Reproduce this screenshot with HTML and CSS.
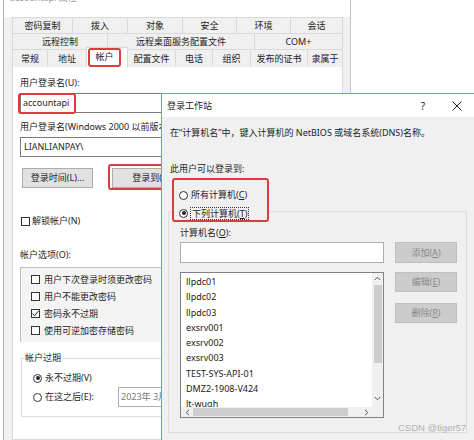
FILE: index.html
```html
<!DOCTYPE html>
<html lang="zh-CN">
<head>
<meta charset="utf-8">
<title>accountapi 属性</title>
<link rel="stylesheet" href="styles.css">
</head>
<body>
<div class="win main">
  <div class="win-title"><span class="win-title-text">accountapi 属性</span></div>
  <div class="tabs">
    <div class="tab-row r1">
      <div class="tab">密码复制</div><div class="tab">拨入</div><div class="tab">对象</div><div class="tab">安全</div><div class="tab">环境</div><div class="tab last">会话</div>
    </div>
    <div class="tab-row r2">
      <div class="tab">远程控制</div><div class="tab">远程桌面服务配置文件</div><div class="tab last">COM+</div>
    </div>
    <div class="tab-row r3">
      <div class="tab">常规</div><div class="tab">地址</div><div class="tab sel"><span class="sel-mark">帐户</span></div><div class="tab">配置文件</div><div class="tab">电话</div><div class="tab">组织</div><div class="tab">发布的证书</div><div class="tab last">隶属于</div>
    </div>
  </div>
  <div class="panel">
    <div class="lbl">用户登录名(U):</div>
    <div class="textbox tb1"><span class="hl">accountapi</span></div>
    <div class="lbl mt8">用户登录名(Windows 2000 以前版本)(W):</div>
    <div class="textbox tb2">LIANLIANPAY\</div>
    <div class="btn-row">
      <div class="btn b-time">登录时间(L)...</div>
      <div class="hl-wrap"><div class="btn b-to">登录到(T)...</div></div>
    </div>
    <div class="check-row unlock"><span class="cb"></span><span>解锁帐户(N)</span></div>
    <div class="lbl opt-lbl">帐户选项(O):</div>
    <div class="opts">
      <div class="check-row opt"><span class="cb"></span><span>用户下次登录时须更改密码</span></div>
      <div class="check-row opt"><span class="cb"></span><span>用户不能更改密码</span></div>
      <div class="check-row opt"><span class="cb checked"><svg viewBox="0 0 9 9" width="9" height="9"><polyline points="1.5,4.5 3.5,6.8 7.6,1.8" fill="none" stroke="#222" stroke-width="1"/></svg></span><span>密码永不过期</span></div>
      <div class="check-row opt"><span class="cb"></span><span>使用可逆加密存储密码</span></div>
      <div class="check-row opt"><span class="cb"></span><span>帐户已禁用</span></div>
    </div>
    <fieldset class="expire">
      <legend>帐户过期</legend>
      <div class="radio-row"><span class="rb on"></span><span>永不过期(V)</span></div>
      <div class="radio-row r-date"><span class="rb"></span><span class="r-date-lbl">在这之后(E):</span><div class="datebox">2023年 3月 31日</div></div>
    </fieldset>
  </div>
</div>

<div class="win dlg">
  <div class="dlg-title">
    <span class="dlg-title-text">登录工作站</span>
    <span class="qm">?</span>
    <span class="close"><svg viewBox="0 0 10 10" width="10" height="10"><path d="M0.5 0.5 L9.5 9.5 M9.5 0.5 L0.5 9.5" stroke="#222" stroke-width="1" fill="none"/></svg></span>
  </div>
  <div class="dlg-body">
    <div class="desc">在“计算机名”中，键入计算机的 NetBIOS 或域名系统(DNS)名称。</div>
    <div class="can">此用户可以登录到:</div>
    <div class="radio-box">
      <div class="radio-row d-r1"><span class="rb"></span><span>所有计算机(<u>C</u>)</span></div>
      <div class="radio-row d-r2"><span class="rb on"></span><span class="focus">下列计算机(<u>T</u>)</span></div>
    </div>
    <div class="group">
      <div class="lbl">计算机名(<u>O</u>):</div>
      <div class="g-row1">
        <div class="textbox name-box"></div>
        <div class="btn dis">添加(<u>A</u>)</div>
      </div>
      <div class="g-row2">
        <div class="listbox">
          <div class="items">
            <div>llpdc01</div>
            <div>llpdc02</div>
            <div>llpdc03</div>
            <div>exsrv001</div>
            <div>exsrv002</div>
            <div>exsrv003</div>
            <div>TEST-SYS-API-01</div>
            <div>DMZ2-1908-V424</div>
            <div>lt-wugh</div>
          </div>
          <div class="vscroll">
            <span class="arr"><svg viewBox="0 0 7 5" width="7" height="5"><polyline points="0.8,4 3.5,1.2 6.2,4" fill="none" stroke="#555" stroke-width="1"/></svg></span>
            <span class="vthumb"></span>
            <span class="fill"></span>
            <span class="arr down"><svg viewBox="0 0 7 5" width="7" height="5"><polyline points="0.8,1 3.5,3.8 6.2,1" fill="none" stroke="#555" stroke-width="1"/></svg></span>
          </div>
          <div class="hscroll">
            <span class="arr h"><svg viewBox="0 0 5 7" width="5" height="7"><polyline points="4,0.8 1.2,3.5 4,6.2" fill="none" stroke="#555" stroke-width="1"/></svg></span>
            <span class="hthumb"></span>
            <span class="fill"></span>
            <span class="arr h"><svg viewBox="0 0 5 7" width="5" height="7"><polyline points="1,0.8 3.8,3.5 1,6.2" fill="none" stroke="#555" stroke-width="1"/></svg></span>
          </div>
          <div class="corner"></div>
        </div>
        <div class="side-btns">
          <div class="btn dis">编辑(<u>E</u>)</div>
          <div class="btn dis">删除(<u>R</u>)</div>
        </div>
      </div>
    </div>
  </div>
</div>

<div class="watermark">CSDN @tiger57</div>
</body>
</html>
```
FILE: styles.css
```css
* { box-sizing: border-box; }

body {
  margin: 0;
  width: 474px;
  height: 440px;
  overflow: hidden;
  position: relative;
  background: #ffffff;
  font-family: "Noto Sans", "Noto Sans CJK SC", sans-serif;
  font-size: 9px;
  line-height: 12px;
  color: #1e1e1e;
}

u { text-decoration: underline; text-underline-offset: 1px; }

/* ---------- main properties window ---------- */
.main {
  position: absolute;
  left: 3px;
  top: 0;
  width: 348px;
  height: 440px;
  border-left: 1px solid #b4b4b4;
  border-right: 1px solid #c4c4c4;
  background: #f0f0f0;
  display: flex;
  flex-direction: column;
}

.win-title {
  height: 17px;
  flex: none;
  background: #ffffff;
  overflow: hidden;
  padding-left: 6px;
}
.win-title-text {
  display: block;
  margin-top: -8px;
  color: #9a9a9a;
  font-size: 9px;
  line-height: 12px;
}

.tabs {
  margin-left: 8px;
  width: 331px;
  flex: none;
}
.tab-row { display: grid; height: 16px; }
.r1 { grid-template-columns: 60px 55px 55px 54px 54px 1fr; }
.r2 { grid-template-columns: 95px 147px 1fr; }
.r3 { grid-template-columns: 35px 39px 41px 48px 37px 38px 57px 1fr; height: 17px; position: relative; z-index: 1; }

.tab {
  border-top: 1px solid #d9d9d9;
  border-left: 1px solid #d9d9d9;
  background: #f0f0f0;
  display: flex;
  align-items: center;
  justify-content: center;
  white-space: nowrap;
  color: #222;
}
.tab.last { border-right: 1px solid #d9d9d9; }
.tab.sel {
  background: #ffffff;
  margin-top: -2px;
  height: 20px;
  border-right: 1px solid #d9d9d9;
  margin-right: -1px;
  justify-content: flex-start;
  padding-left: 1px;
}
.sel-mark {
  border: 2px solid #e0393e;
  border-radius: 3px;
  height: 19px;
  width: 33px;
  display: flex;
  align-items: center;
  justify-content: center;
  margin-top: -1px;
}

.panel {
  flex: 1;
  margin-left: 8px;
  width: 331px;
  background: #ffffff;
  border: 1px solid #d9d9d9;
  padding: 10px 0 0 7px;
  display: flex;
  flex-direction: column;
  align-items: flex-start;
}

.lbl { line-height: 12px; white-space: nowrap; }
.mt8 { margin-top: 8px; }

.textbox {
  height: 20px;
  width: 300px;
  border: 1px solid #7a7a7a;
  background: #ffffff;
  display: flex;
  align-items: center;
  white-space: nowrap;
}
.tb1 { margin-top: 4px; }
.tb2 { margin-top: 4px; padding-left: 3px; }
.hl {
  margin-left: -3px;
  height: 21px;
  border: 2px solid #e0393e;
  border-radius: 3px;
  padding: 0 5px 0 3px;
  display: flex;
  align-items: center;
}

.btn-row {
  margin-top: 11px;
  height: 20px;
  display: flex;
  align-items: flex-start;
}
.btn {
  height: 20px;
  background: #e1e1e1;
  border: 1px solid #adadad;
  display: flex;
  align-items: center;
  justify-content: center;
  white-space: nowrap;
}
.b-time { width: 71px; margin-left: 2px; }
.hl-wrap {
  margin-left: 15px;
  margin-top: -4px;
  border: 2px solid #e0393e;
  border-radius: 3px;
  padding: 2px 2px 0 2px;
}
.b-to { width: 85px; }

.check-row {
  display: flex;
  align-items: center;
  height: 12px;
  white-space: nowrap;
}
.cb {
  width: 9px;
  height: 9px;
  border: 1px solid #333333;
  background: #ffffff;
  flex: none;
  display: flex;
}
.cb svg { margin: -1px; }
.unlock { margin-top: 27px; margin-left: 1px; gap: 2px; }
.opt-lbl { margin-top: 22px; }

.opts {
  margin-top: 6px;
  width: 300px;
  height: 75px;
  background: #f4f4f4;
  border: 1px solid #bdbdbd;
  border-bottom: none;
  overflow: hidden;
  padding: 3px 0 0 10px;
  display: flex;
  flex-direction: column;
}
.opt { height: 17px; gap: 4px; flex: none; }

.expire {
  margin: 10px 0 0 1px;
  width: 300px;
  height: 65px;
  border: 1px solid #dcdcdc;
  padding: 8px 0 0 11px;
  min-inline-size: 0;
}
.expire legend {
  padding: 0 1px;
  margin-left: -9px;
  line-height: 12px;
  color: #222;
}

.radio-row {
  display: flex;
  align-items: center;
  height: 12px;
  gap: 3px;
  white-space: nowrap;
}
.rb {
  width: 9px;
  height: 9px;
  border: 1px solid #333333;
  border-radius: 50%;
  background: #ffffff;
  flex: none;
  display: flex;
  align-items: center;
  justify-content: center;
}
.rb.on::after {
  content: "";
  width: 4px;
  height: 4px;
  border-radius: 50%;
  background: #222222;
}
.r-date { margin-top: 3px; height: 20px; }
.r-date-lbl { width: 70px; }
.datebox {
  height: 20px;
  width: 120px;
  border: 1px solid #adadad;
  background: #ffffff;
  color: #777777;
  padding-left: 2px;
  display: flex;
  align-items: center;
}

/* ---------- login workstation dialog ---------- */
.dlg {
  position: absolute;
  left: 161px;
  top: 93px;
  width: 314px;
  height: 360px;
  border: 1px solid #6a9fd6;
  background: #f0f0f0;
  display: flex;
  flex-direction: column;
}
.dlg-title {
  height: 23px;
  flex: none;
  background: #ffffff;
  display: flex;
  align-items: center;
  padding: 0 6px 0 5px;
}
.dlg-title-text { flex: 1; }
.qm { width: 20px; text-align: center; font-size: 10px; margin-right: 13px; }
.close { width: 22px; display: flex; justify-content: center; }

.dlg-body {
  padding-left: 8px;
  display: flex;
  flex-direction: column;
  align-items: flex-start;
}
.desc { margin-top: 10px; white-space: nowrap; }
.can { margin-top: 24px; }

.radio-box {
  position: relative;
  z-index: 1;
  margin: 3px 0 0 2px;
  width: 97px;
  height: 44px;
  border: 2px solid #e0393e;
  border-radius: 3px;
  background: #f0f0f0;
  padding: 9px 0 0 5px;
}
.d-r2 { margin-top: 6px; }
.focus {
  border: 1px dotted #333333;
  line-height: 11px;
  padding: 0 1px;
  margin-left: -1px;
}

.group {
  margin: -11px 0 0 -2px;
  width: 299px;
  height: 222px;
  border: 1px solid #dcdcdc;
  padding: 15px 0 0 11px;
}
.g-row1 { margin-top: 3px; display: flex; gap: 11px; }
.name-box { width: 204px; height: 21px; border-color: #adadad; }
.btn.dis {
  width: 62px;
  height: 21px;
  background: #cccccc;
  border: 1px solid #bfbfbf;
  color: #8a8a8a;
}
.g-row2 { margin-top: 9px; display: flex; gap: 11px; align-items: flex-start; }
.side-btns { display: flex; flex-direction: column; gap: 11px; }
.side-btns .btn.dis { height: 20px; }

.listbox {
  width: 204px;
  height: 146px;
  border: 1px solid #828282;
  background: #ffffff;
  display: grid;
  grid-template-columns: 1fr 11px;
  grid-template-rows: 1fr 10px;
}
.items {
  overflow: hidden;
  padding: 1px 0 0 5px;
  line-height: 15.3px;
  white-space: nowrap;
  color: #222;
}
.vscroll {
  background: #f0f0f0;
  display: flex;
  flex-direction: column;
  align-items: center;
}
.vscroll .arr { height: 11px; display: flex; align-items: center; justify-content: center; }
.vscroll .arr.down { height: 17px; }
.vthumb { width: 8px; height: 78px; margin-top: 1px; background: #cdcdcd; }
.fill { flex: 1; }
.hscroll {
  background: #f0f0f0;
  display: flex;
  align-items: center;
}
.hscroll .arr.h { width: 12px; display: flex; justify-content: center; }
.hthumb { width: 155px; height: 8px; background: #cdcdcd; }
.corner { background: #f0f0f0; }

.watermark {
  position: absolute;
  left: 398px;
  top: 422px;
  font-family: "Liberation Sans", Arial, sans-serif;
  font-size: 9.5px;
  line-height: 12px;
  color: #b0b0b0;
}
```
